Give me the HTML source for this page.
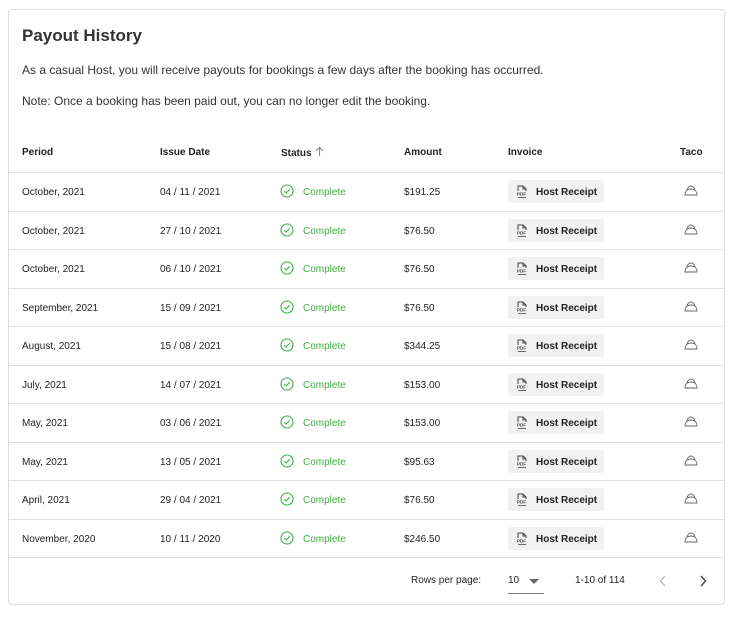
<!DOCTYPE html>
<html><head><style>
body{margin:0;width:744px;height:622px;background:#fff;font-family:"Liberation Sans",Arial,sans-serif;color:#222;position:relative;overflow:hidden}
.card{position:absolute;left:8px;top:9px;width:717px;height:596px;border:1px solid #dcdcdc;border-radius:4px;box-sizing:border-box}
.t{position:absolute;white-space:nowrap}
h1{position:absolute;left:22px;top:26px;margin:0;font-size:17px;font-weight:bold;color:#333}
.p{font-size:12px;color:#333}
.hd{font-size:10px;font-weight:bold;color:#222}
.line{position:absolute;left:9px;width:715px;height:1px;background:#e0e0e0}
.c{font-size:10px;color:#222}
.g{font-size:10px;color:#3fae3f}
.btn{position:absolute;left:508px;width:96px;height:23px;background:#f1f1f1;border-radius:3px;font-size:10px;font-weight:bold;color:#222}
</style></head><body>
<div class="card"></div>
<h1>Payout History</h1>
<div class="t p" style="left:22px;top:63px">As a casual Host, you will receive payouts for bookings a few days after the booking has occurred.</div>
<div class="t p" style="left:22px;top:94px">Note: Once a booking has been paid out, you can no longer edit the booking.</div>
<div class="t hd" style="left:22px;top:147px">Period</div>
<div class="t hd" style="left:160px;top:147px">Issue Date</div>
<div class="t hd" style="left:281px;top:146px">Status <svg width="11" height="11" viewBox="0 0 12 12" style="vertical-align:-1px"><path d="M6 11V1.5M2 5.5L6 1.5L10 5.5" stroke="#888" stroke-width="1.2" fill="none"/></svg></div>
<div class="t hd" style="left:404px;top:147px">Amount</div>
<div class="t hd" style="left:508px;top:147px">Invoice</div>
<div class="t hd" style="left:680px;top:147px">Taco</div>
<div class="line" style="top:172px"></div>
<div id="rows"></div>
<div class="line" style="top:557px"></div>
<div class="t c" style="left:411px;top:575px">Rows per page:</div>
<div class="t c" style="left:508px;top:575px">10</div>
<svg class="t" style="left:529px;top:579px" width="10" height="6"><path d="M0 0L10 0L5 5Z" fill="#666"/></svg>
<div class="t" style="left:508px;top:593px;width:36px;height:1px;background:#777"></div>
<div class="t c" style="left:575px;top:575px">1-10 of 114</div>
<svg class="t" style="left:659px;top:575px" width="8" height="12"><path d="M6 1L1.5 6L6 11" stroke="#bbb" stroke-width="1.4" fill="none"/></svg>
<svg class="t" style="left:699px;top:575px" width="8" height="12"><path d="M2 1L6.5 6L2 11" stroke="#444" stroke-width="1.4" fill="none"/></svg>
<script>
var d=[["October, 2021","04 / 11 / 2021","$191.25"],["October, 2021","27 / 10 / 2021","$76.50"],["October, 2021","06 / 10 / 2021","$76.50"],["September, 2021","15 / 09 / 2021","$76.50"],["August, 2021","15 / 08 / 2021","$344.25"],["July, 2021","14 / 07 / 2021","$153.00"],["May, 2021","03 / 06 / 2021","$153.00"],["May, 2021","13 / 05 / 2021","$95.63"],["April, 2021","29 / 04 / 2021","$76.50"],["November, 2020","10 / 11 / 2020","$246.50"]];
var h="";
d.forEach(function(r,i){
 var y=Math.round(172+i*38.5);var cy=y+19;
 if(i>0)h+='<div class="line" style="top:'+y+'px"></div>';
 h+='<div class="t c" style="left:22px;top:'+(cy-4)+'px">'+r[0]+'</div>';
 h+='<div class="t c" style="left:160px;top:'+(cy-4)+'px">'+r[1]+'</div>';
 h+='<svg class="t" style="left:280px;top:'+(cy-7)+'px" width="14" height="14"><circle cx="7" cy="7" r="6" stroke="#3fae3f" stroke-width="1.1" fill="none"/><path d="M4.3 7.2L6.2 9L9.8 5.3" stroke="#3fae3f" stroke-width="1.1" fill="none"/></svg>';
 h+='<div class="t g" style="left:303px;top:'+(cy-4)+'px">Complete</div>';
 h+='<div class="t c" style="left:404px;top:'+(cy-4)+'px">'+r[2]+'</div>';
 h+='<div class="btn" style="top:'+(cy-11)+'px"><svg style="position:absolute;left:8px;top:5px" width="12" height="14" viewBox="0 0 12 14"><path d="M2 6V1h5l3 3v2M7 1v3h3" stroke="#444" stroke-width="1" fill="none"/><text x="1" y="10.5" font-size="4.5" font-weight="bold" fill="#444" font-family="Liberation Sans">PDF</text><path d="M2 12.5h8" stroke="#444" stroke-width="0.8"/></svg><span style="position:absolute;left:28px;top:7px">Host Receipt</span></div>';
 h+='<svg class="t" style="left:684px;top:'+(cy-6)+'px" width="14" height="11" viewBox="0 0 14 11"><path d="M1 10h12C13 6 10.5 4 7 4S1 6 1 10Z" stroke="#666" stroke-width="0.9" fill="none"/><path d="M3 5.5C3 3 5 1 7 1S11 3 11 5.5" stroke="#666" stroke-width="0.9" fill="none"/></svg>';
});
document.getElementById("rows").innerHTML=h;
</script>
</body></html>
